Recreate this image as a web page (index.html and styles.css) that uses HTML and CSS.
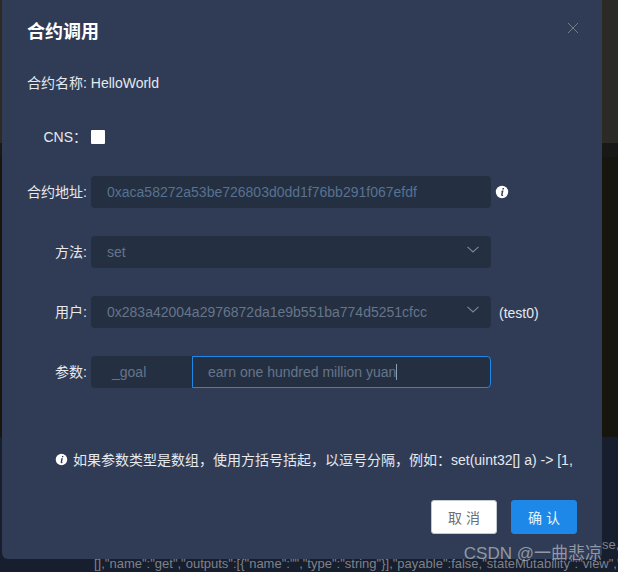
FILE: index.html
```html
<!DOCTYPE html>
<html lang="zh-CN">
<head>
<meta charset="utf-8">
<title>合约调用</title>
<link rel="stylesheet" href="styles.css">
</head>
<body>
<div class="stage">
  <div class="backdrop">
    <div class="bg-top"></div>
    <div class="bg-band"></div>
    <div class="bg-mid"></div>
    <div class="bg-bottom">
      <div class="code code-a">se,</div>
      <div class="code code-b">[],"name":"get","outputs":[{"name":"","type":"string"}],"payable":false,"stateMutability":"view","type":"f</div>
    </div>
  </div>

  <div class="dialog">
    <header class="dialog-head">
      <h1 class="dialog-title">合约调用</h1>
      <svg class="close" viewBox="0 0 12 12" width="12" height="12" aria-label="关闭"><path d="M1 1l10 10M11 1L1 11" fill="none" stroke="#747c8a" stroke-width="1"/></svg>
    </header>

    <div class="row row-name"><span class="lifted">合约名称: HelloWorld</span></div>

    <div class="row row-cns">
      <label class="label">CNS：</label>
      <span class="checkbox"></span>
    </div>

    <div class="row">
      <label class="label">合约地址:</label>
      <div class="field field-addr">0xaca58272a53be726803d0dd1f76bb291f067efdf</div>
      <svg class="info" viewBox="0 0 14 14" width="14" height="14"><circle cx="7" cy="7" r="6.2" fill="#fff"/><path d="M7.6 3.1h1.5l-.3 1.4H7.3zM7 5.6h1.5L7.6 9.6c-.1.4.1.5.6.3l-.1.8c-1.300.5-2.200.1-2-.9l.6-3.100-.6-.1z" fill="#303c55"/></svg>
    </div>

    <div class="row">
      <label class="label">方法:</label>
      <div class="field">set
        <svg class="chevron" viewBox="0 0 12 7" width="12" height="7"><path d="M.5.8L6 6l5.500-5.200" fill="none" stroke="#7d8694" stroke-width="1.100"/></svg>
      </div>
    </div>

    <div class="row">
      <label class="label">用户:</label>
      <div class="field">0x283a42004a2976872da1e9b551ba774d5251cfcc
        <svg class="chevron" viewBox="0 0 12 7" width="12" height="7"><path d="M.5.8L6 6l5.500-5.200" fill="none" stroke="#7d8694" stroke-width="1.100"/></svg>
      </div>
      <span class="suffix">(test0)</span>
    </div>

    <div class="row row-params">
      <label class="label">参数:</label>
      <div class="param-group">
        <div class="param-name">_goal</div>
        <div class="param-value">earn one hundred million yuan<span class="caret"></span></div>
      </div>
    </div>

    <p class="note">
      <svg class="note-icon" viewBox="0 0 14 14" width="13" height="13"><circle cx="7" cy="7" r="6.2" fill="#fff"/><path d="M7.6 3.1h1.5l-.3 1.4H7.3zM7 5.600h1.500L7.600 9.600c-.1.400.1.500.6.300l-.1.800c-1.300.500-2.200.100-2-.900l.6-3.100-.6-.1z" fill="#303c55"/></svg>
      如果参数类型是数组，使用方括号括起，以逗号分隔，例如：set(uint32[] a) -&gt; [1,
    </p>

    <footer class="dialog-foot">
      <button class="btn btn-cancel">取 消</button>
      <button class="btn btn-ok">确 认</button>
    </footer>
  </div>

  <div class="watermark">CSDN @一曲悲凉</div>
</div>
</body>
</html>
```
FILE: styles.css
```css
* { box-sizing: border-box; }
html, body { margin: 0; padding: 0; }
body {
  font-family: "Liberation Sans", "Noto Sans CJK SC", sans-serif;
  font-size: 14px;
  color: #e6e9ee;
  background: #171e2d;
}
.stage {
  position: relative;
  width: 618px;
  height: 572px;
  overflow: hidden;
}
.backdrop { display: flex; flex-direction: column; height: 100%; }
.bg-top { height: 143px; background: #2b2a24; }
.bg-band { height: 14px; background: #181816; }
.bg-mid { height: 280px; background: #16160f; }
.bg-bottom { flex: 1; display: flex; flex-direction: column; justify-content: flex-end; background: #171e2d; }
.code {
  color: #7d828c;
  white-space: nowrap;
  font-size: 13px;
  line-height: 19px;
}
.code-a { padding-left: 602px; }
.code-b { padding-left: 94px; margin-bottom: -1px; }

.dialog {
  position: absolute;
  left: 2px;
  top: 0;
  width: 600px;
  height: 559px;
  padding: 20px 25px 0 25px;
  background: #303c55;
  border-radius: 0 0 6px 6px;
}
.dialog-head {
  display: flex;
  justify-content: space-between;
  align-items: center;
  height: 24px;
  margin-bottom: 23px;
}
.dialog-title { margin: 0; font-size: 18px; font-weight: 700; line-height: 24px; color: #fff; }
.close { margin-right: -2px; margin-top: -8px; }

.row { display: flex; align-items: center; height: 32px; margin-bottom: 28px; }
.row-name { margin-bottom: 22px; }
.row-cns { margin-bottom: 23px; }
.row-params { margin-bottom: 55px; }
.lifted { padding-bottom: 2px; }
.label { width: 60px; margin-right: 4px; padding-bottom: 2px; text-align: right; white-space: nowrap; flex: none; }
.checkbox { width: 14px; height: 14px; background: #fff; border-radius: 1px; }
.field {
  position: relative;
  display: flex;
  align-items: center;
  width: 400px;
  height: 32px;
  padding-left: 16px;
  background: #242f42;
  border-radius: 4px;
  color: #66758a;
  white-space: nowrap;
}
.field-addr { color: #587290; }
.chevron { position: absolute; right: 12px; top: 10px; }
.info { margin-left: 4px; }
.suffix { margin-left: 8px; padding-top: 2px; }

.param-group { display: flex; width: 400px; height: 32px; }
.param-name {
  width: 101px;
  padding-left: 21px;
  line-height: 32px;
  background: #242f42;
  border-radius: 4px 0 0 4px;
  color: #66758a;
}
.param-value {
  flex: 1;
  display: flex;
  align-items: center;
  padding-left: 15px;
  background: #242f42;
  border: 1px solid #1e88e8;
  border-radius: 0 4px 4px 0;
  color: #66758a;
  white-space: nowrap;
}
.caret { width: 1px; height: 16px; background: #8fa0b5; }

.note {
  display: flex;
  align-items: center;
  gap: 5px;
  height: 32px;
  margin: 0 0 25px 28px;
  white-space: nowrap;
}
.note-icon { flex: none; }

.dialog-foot { display: flex; justify-content: flex-end; gap: 14px; }
.btn {
  width: 66px;
  height: 34px;
  padding: 0;
  border-radius: 3px;
  font: inherit;
}
.btn-cancel { background: #fff; border: 1px solid #c4c8cf; color: #6b6f76; }
.btn-ok { background: #1e88e8; border: 1px solid #1e88e8; color: #e8f2fc; }

.watermark {
  position: absolute;
  right: 16px;
  top: 543px;
  font-size: 17px;
  line-height: 22px;
  color: rgba(190, 194, 200, .7);
  white-space: nowrap;
}
```
